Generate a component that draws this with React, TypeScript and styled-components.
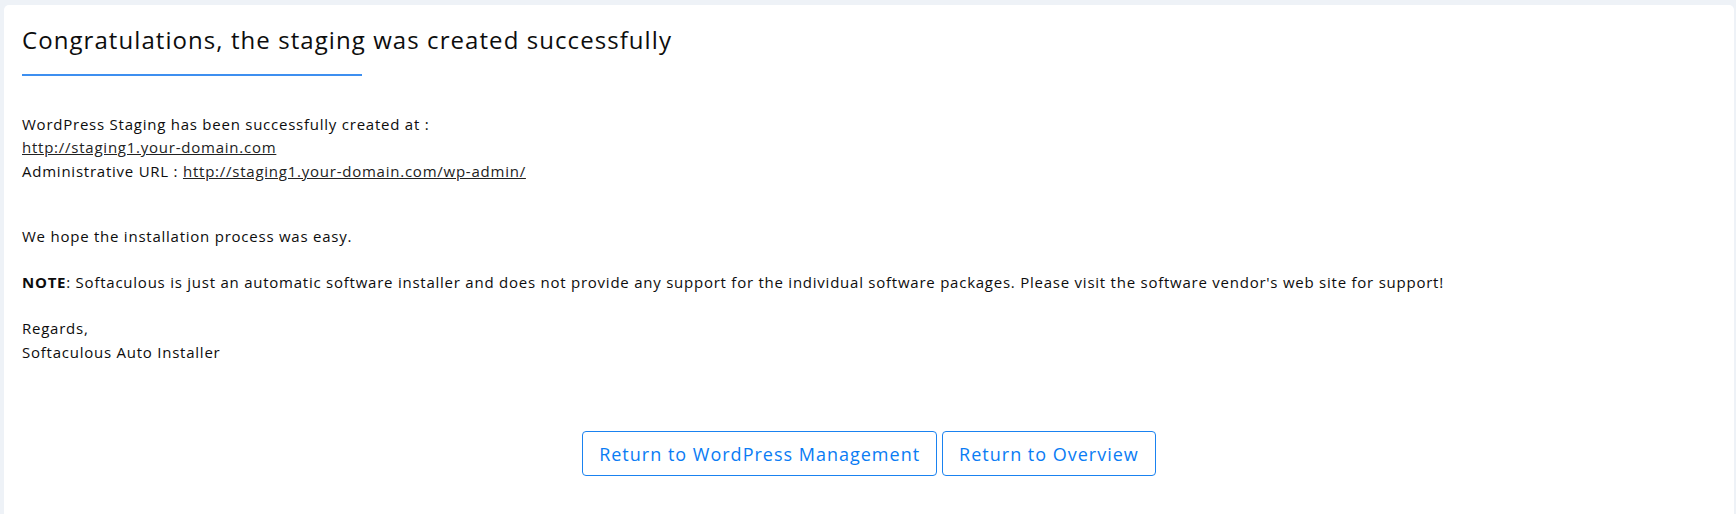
import React from "react";
import styled, { createGlobalStyle } from "styled-components";

const Global = createGlobalStyle`
  html, body { margin: 0; padding: 0; background: #eef2f7; }
  body { font-family: "Open Sans", "Liberation Sans", sans-serif; }
`;

const Page = styled.div`
  box-sizing: border-box;
  height: 514px;
  overflow: hidden;
  padding: 5px 2px 0 4px;
`;

const Card = styled.section`
  box-sizing: border-box;
  height: 560px;
  background: #ffffff;
  border-radius: 5px;
  padding: 19px 18px 0;
`;

const Title = styled.h2`
  margin: 0;
  font-size: 24px;
  font-weight: 400;
  line-height: 32px;
  letter-spacing: 1.07px;
  color: #0d0d0d;
`;

const Rule = styled.div`
  width: 340px;
  height: 2px;
  margin-top: 18px;
  background: #3d8ff0;
`;

const Body = styled.div`
  margin-top: 37px;
  font-size: 15px;
  line-height: 23.3px;
  letter-spacing: 0.76px;
  color: #0d0d0d;
`;

const Para = styled.p<{ $gap: number }>`
  margin: ${(p) => p.$gap}px 0 0;
`;

const Link = styled.a`
  color: #222222;
  text-decoration: underline;
`;

const ButtonRow = styled.div`
  display: flex;
  justify-content: center;
  gap: 5px;
  margin-top: 67px;
`;

const Button = styled.button`
  box-sizing: border-box;
  height: 45px;
  padding: 0 16px;
  background: #ffffff;
  border: 1px solid #1a82f0;
  border-radius: 4px;
  color: #0a7cf4;
  font-family: inherit;
  font-size: 18px;
  font-weight: 500;
  letter-spacing: 1px;
  cursor: pointer;
`;

export default function App() {
  return (
    <>
      <Global />
      <Page>
        <Card>
          <Title>Congratulations, the staging was created successfully</Title>
          <Rule />
          <Body>
            <Para $gap={0}>
              WordPress Staging has been successfully created at :
              <br />
              <Link href="#">http://staging1.your-domain.com</Link>
              <br />
              Administrative URL : <Link href="#">http://staging1.your-domain.com/wp-admin/</Link>
            </Para>
            <Para $gap={42}>We hope the installation process was easy.</Para>
            <Para $gap={23}>
              <b>NOTE</b>: Softaculous is just an automatic software installer and does not provide any
              support for the individual software packages. Please visit the software vendor's web site
              for support!
            </Para>
            <Para $gap={23}>
              Regards,
              <br />
              Softaculous Auto Installer
            </Para>
          </Body>
          <ButtonRow>
            <Button>Return to WordPress Management</Button>
            <Button>Return to Overview</Button>
          </ButtonRow>
        </Card>
      </Page>
    </>
  );
}
